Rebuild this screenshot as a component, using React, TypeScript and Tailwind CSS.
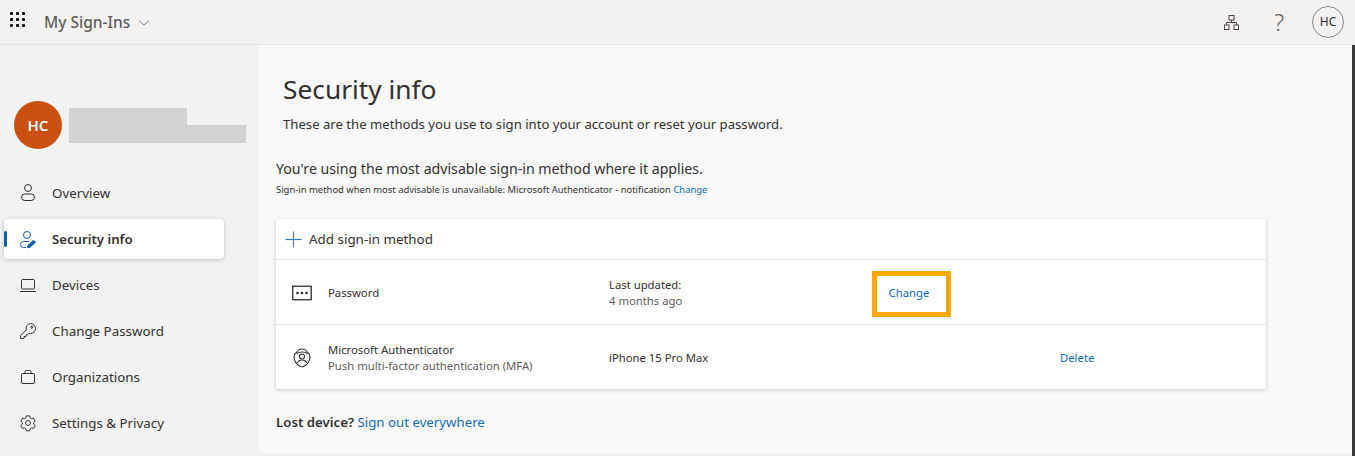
import { ChevronDown } from "lucide-react";

function UserIcon() {
  return (
    <svg width="18" height="18" viewBox="0 0 18 18" fill="none" stroke="#323130" strokeWidth="1">
      <circle cx="9" cy="4" r="3.5" />
      <rect x="2.5" y="10" width="13" height="6.500" rx="3.250" />
    </svg>
  );
}

function UserEditIcon() {
  return (
    <svg width="18" height="18" viewBox="0 0 18 18" fill="none" stroke="#0f5fb0" strokeWidth="1">
      <circle cx="8" cy="4" r="3.5" />
      <path d="M7 16.500H4.500a3 3 0 0 1 0-6h6" />
      <path d="M8.500 16.800l.6-2.600 5.400-5 2 2-5.400 5z" fill="#0f5fb0" />
    </svg>
  );
}

function LaptopIcon() {
  return (
    <svg width="18" height="18" viewBox="0 0 18 18" fill="none" stroke="#323130" strokeWidth="1">
      <rect x="2.500" y="3.500" width="13" height="9.500" rx="1" />
      <path d="M1 15.500h16" />
    </svg>
  );
}

function KeyIcon() {
  return (
    <svg width="18" height="18" viewBox="0 0 18 18" fill="none" stroke="#323130" strokeWidth="1" strokeLinejoin="round">
      <path d="M11.500 1.500a5 5 0 0 1 0 10c-.5 0-1-.1-1.500-.2l-1.300 1.400H7v1.800H5.200v1.800L1.500 16.500v-2.800l5.800-5.800a5 5 0 0 1 4.200-6.400z" />
      <circle cx="12.800" cy="5.200" r="1" />
    </svg>
  );
}

function BriefcaseIcon() {
  return (
    <svg width="18" height="18" viewBox="0 0 18 18" fill="none" stroke="#323130" strokeWidth="1">
      <rect x="2.500" y="5.500" width="13" height="10" rx="1.500" />
      <path d="M6 5.500V3.800A1.300 1.300 0 0 1 7.300 2.500h3.400A1.300 1.300 0 0 1 12 3.800v1.700" />
    </svg>
  );
}

function GearIcon() {
  return (
    <svg width="18" height="18" viewBox="0 0 24 24" fill="none" stroke="#323130" strokeWidth="1.300" strokeLinejoin="round">
      <path d="M9.700 2.500h4.600l.6 2.900 1.700 1 2.800-.9 2.300 4-2.200 2 .0 1.900 2.200 2-2.300 4-2.800-.9-1.700 1-.6 2.900H9.700l-.6-2.900-1.700-1-2.800.9-2.300-4 2.200-2v-1.900l-2.200-2 2.300-4 2.800.9 1.700-1z" />
      <circle cx="12" cy="12" r="3.300" />
    </svg>
  );
}

function WaffleIcon() {
  return (
    <div className="grid w-[15px] grid-cols-3 gap-[3px]">
      {[0, 1, 2, 3, 4, 5, 6, 7, 8].map((i) => (
        <span key={i} className="h-[3px] w-[3px] rounded-[1px] bg-[#0a0a0a]" />
      ))}
    </div>
  );
}

function OrgIcon() {
  return (
    <svg width="17" height="17" viewBox="0 0 17 17" fill="none" stroke="#4b4644" strokeWidth="1">
      <rect x="6" y="1.500" width="5" height="4.500" />
      <rect x="1.500" y="11" width="4.500" height="4.500" />
      <rect x="11" y="11" width="4.500" height="4.500" />
      <path d="M8.500 6v2.500M3.500 11V8.500h10V11" />
    </svg>
  );
}

function PasswordIcon() {
  return (
    <svg width="20" height="16" viewBox="0 0 20 16" fill="none">
      <rect x="0.750" y="1.250" width="18.500" height="13.500" stroke="#323130" strokeWidth="1.300" />
      <circle cx="5.500" cy="8" r="1.300" fill="#323130" />
      <circle cx="10" cy="8" r="1.300" fill="#323130" />
      <circle cx="14.500" cy="8" r="1.300" fill="#323130" />
    </svg>
  );
}

function PlusIcon() {
  return (
    <svg width="17" height="17" viewBox="0 0 17 17" fill="none" strokeWidth="1.200">
      <path d="M0.500 8.500h16" stroke="#2f7fc8" />
      <path d="M8.500 0.500v16" stroke="#6a6f9a" />
    </svg>
  );
}

function AuthenticatorIcon() {
  return (
    <svg width="18" height="20" viewBox="0 0 18 20" fill="none" stroke="#323130" strokeWidth="1.100">
      <path d="M9 1c2.500 0 4.500 1.500 5.500 3.500 1.500.8 2.500 1.500 2.500 4 0 5-3.500 10-8 10.500C4.500 18.500 1 13.500 1 8.500c0-2.500 1-3.200 2.500-4C4.500 2.500 6.500 1 9 1z" />
      <path d="M3.500 5.500C5 4.500 7 4 9 4s4 .5 5.500 1.500" />
      <circle cx="9" cy="8.500" r="2.500" />
      <path d="M4.500 15c.5-2 2.500-3 4.500-3s4 1 4.500 3" />
    </svg>
  );
}

const navItems = [
  { label: "Overview", icon: <UserIcon /> },
  { label: "Security info", icon: <UserEditIcon />, active: true },
  { label: "Devices", icon: <LaptopIcon /> },
  { label: "Change Password", icon: <KeyIcon /> },
  { label: "Organizations", icon: <BriefcaseIcon /> },
  { label: "Settings & Privacy", icon: <GearIcon /> },
];

export default function App() {
  return (
    <div className="flex h-[456px] w-[1355px] flex-col overflow-hidden bg-[#f2f2f2] font-['Noto_Sans','Open_Sans',sans-serif] text-[#323130]">
      <header className="flex h-[45px] shrink-0 items-center border-b border-[#e6e6e6] bg-[#f3f2f1]">
        <div className="mb-[5px] ml-[10px]">
          <WaffleIcon />
        </div>
        <span className="ml-[19px] mt-[1px] text-[15.5px] font-medium text-[#605e5c]">My Sign-Ins</span>
        <ChevronDown size={18} strokeWidth={1} color="#605e5c" className="ml-[5px] mt-[2px]" />
        <div className="ml-auto flex items-center">
          <OrgIcon />
          <span className="ml-[34px] text-[23px] font-light text-[#605e5c]">?</span>
          <div className="ml-[28px] mr-[11px] flex h-[32px] w-[32px] items-center justify-center rounded-full border border-[#8a8886] text-[12px]">
            HC
          </div>
        </div>
      </header>

      <div className="flex min-h-0 flex-1 border-r-[3px] border-[#3a3a3a]">
        <aside className="w-[259px] shrink-0 pt-[56px]">
          <div className="flex items-center pl-[14px]">
            <div className="flex h-[48px] w-[48px] items-center justify-center rounded-full bg-[#ca5010] text-[15px] font-semibold text-white">
              HC
            </div>
            <div className="ml-[7px] flex items-end">
              <div className="h-[35px] w-[118px] bg-[#d1d2d4]" />
              <div className="h-[18px] w-[59px] bg-[#d1d2d4]" />
            </div>
          </div>
          <nav className="mt-[24px] pl-[4px]">
            {navItems.map((item) => (
              <div
                key={item.label}
                className={
                  item.active
                    ? "relative mb-[6px] flex h-[40px] w-[220px] items-center rounded-[4px] bg-white pl-[15px] pt-[2px] text-[13.2px] font-semibold shadow-[0_1px_4px_rgba(0,0,0,0.22)]"
                    : "mb-[6px] flex h-[40px] w-[220px] items-center pl-[15px] text-[13.35px]"
                }
              >
                {item.active && (
                  <span className="absolute left-0 top-[12px] h-[16px] w-[3px] rounded-[2px] bg-[#0f5fb0]" />
                )}
                <span className="flex w-[18px] items-center justify-center">{item.icon}</span>
                <span className="ml-[15px]">{item.label}</span>
              </div>
            ))}
          </nav>
        </aside>

        <main className="mb-[3px] min-w-0 flex-1 bg-[#f9f9f9] pl-[17px]">
          <h1 className="ml-[7px] mt-[26px] text-[26.3px] leading-[36px] font-normal">Security info</h1>
          <p className="ml-[7px] mt-[8px] text-[13.15px] leading-[18px]">
            These are the methods you use to sign into your account or reset your password.
          </p>
          <p className="mt-[26px] text-[14.15px] leading-[20px]">
            You're using the most advisable sign-in method where it applies.
          </p>
          <p className="mt-[4px] text-[9.45px] leading-[14px]">
            Sign-in method when most advisable is unavailable: Microsoft Authenticator - notification{" "}
            <span className="text-[#0f6cbd]">Change</span>
          </p>

          <section className="mt-[22px] w-[990px] rounded-[2px] bg-white text-[11.3px] shadow-[0_1px_4px_rgba(0,0,0,0.2)]">
            <div className="flex h-[41px] items-center border-b border-[#e6e6e6] pl-[9px]">
              <PlusIcon />
              <span className="ml-[7px] text-[13.4px]">Add sign-in method</span>
            </div>
            <div className="flex h-[65px] items-center border-b border-[#e6e6e6] pt-[2px]">
              <div className="ml-[16px] flex w-[20px] justify-center">
                <PasswordIcon />
              </div>
              <span className="ml-[16px] w-[281px]">Password</span>
              <div className="w-[263px] leading-[16px]">
                <div>Last updated:</div>
                <div className="text-[#605e5c]">4 months ago</div>
              </div>
              <div className="mt-[2px] flex h-[46px] w-[79px] items-center justify-center border-[5px] border-[#ffa900] pr-[5px] pb-[2px] text-[#0f6cbd]">
                Change
              </div>
            </div>
            <div className="flex h-[64px] items-center pt-[2px]">
              <div className="ml-[17px] flex w-[18px] justify-center">
                <AuthenticatorIcon />
              </div>
              <div className="ml-[17px] w-[281px] leading-[16px]">
                <div>Microsoft Authenticator</div>
                <div className="text-[#605e5c]">Push multi-factor authentication (MFA)</div>
              </div>
              <span className="w-[451px]">iPhone 15 Pro Max</span>
              <span className="text-[#0f6cbd]">Delete</span>
            </div>
          </section>

          <p className="mt-[24px] text-[13.25px] leading-[18px]">
            <span className="font-semibold">Lost device? </span>
            <span className="text-[#0f6cbd]">Sign out everywhere</span>
          </p>
        </main>
      </div>
    </div>
  );
}
